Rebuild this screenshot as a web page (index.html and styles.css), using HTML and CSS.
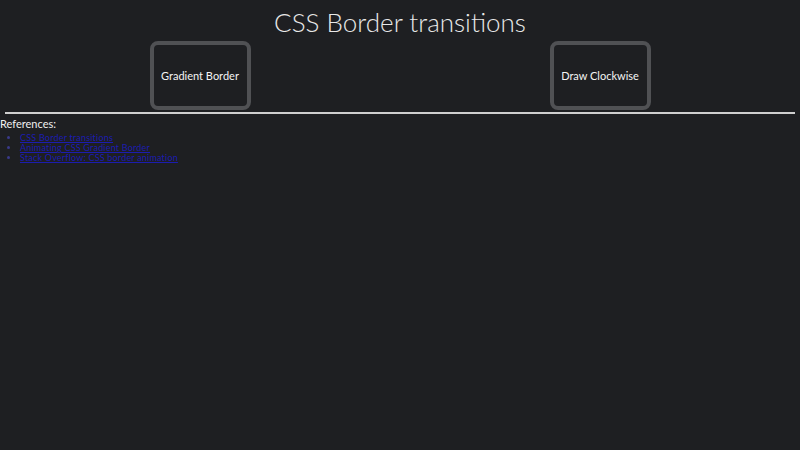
FILE: index.html
```html
<html>

<head>
    <link rel="stylesheet" href="styles.css">
</head>

<body>
    <h1 class="title">CSS Border transitions</h1>
    <div class="demos">
        <div class="cell">
            <div class="box">Gradient Border</div>
        </div>
        <div class="cell">
            <div class="box">Draw Clockwise</div>
        </div>
    </div>
    <hr>
    <div class="refs">
        References:
        <ul>
            <li><a href="#">CSS Border transitions</a></li>
            <li><a href="#">Animating CSS Gradient Border</a></li>
            <li><a href="#">Stack Overflow: CSS border animation</a></li>
        </ul>
    </div>
</body>

</html>
```

FILE: styles.css
```css
body {
    margin: 0;
    background: #1e1f22;
    color: #e8e8e8;
    font-family: Lato, "Open Sans", sans-serif;
}

.title {
    margin: 6px 0 0;
    font-size: 26px;
    font-weight: 300;
    text-align: center;
    line-height: 32px;
}

.demos {
    display: flex;
    margin-top: 3px;
}

.cell {
    flex: 1;
    display: flex;
    justify-content: center;
}

.box {
    width: 93px;
    height: 61px;
    border: 4px solid #505154;
    border-radius: 8px;
    display: flex;
    align-items: center;
    justify-content: center;
    font-size: 11px;
    color: #f4f4f4;
}

hr {
    margin: 2px 5px 0;
    border: 0;
    height: 2px;
    background: #cfcfcf;
}

.refs {
    margin-top: 3px;
    font-size: 11px;
    line-height: 14px;
    color: #f0f0f0;
}

.refs ul {
    margin: 2px 0 0;
    padding-left: 20px;
    font-size: 9px;
    letter-spacing: 0.2px;
    line-height: 10px;
}

.refs li {
    color: #3a3a8a;
}

.refs a {
    color: #1c1cb0;
}
```
